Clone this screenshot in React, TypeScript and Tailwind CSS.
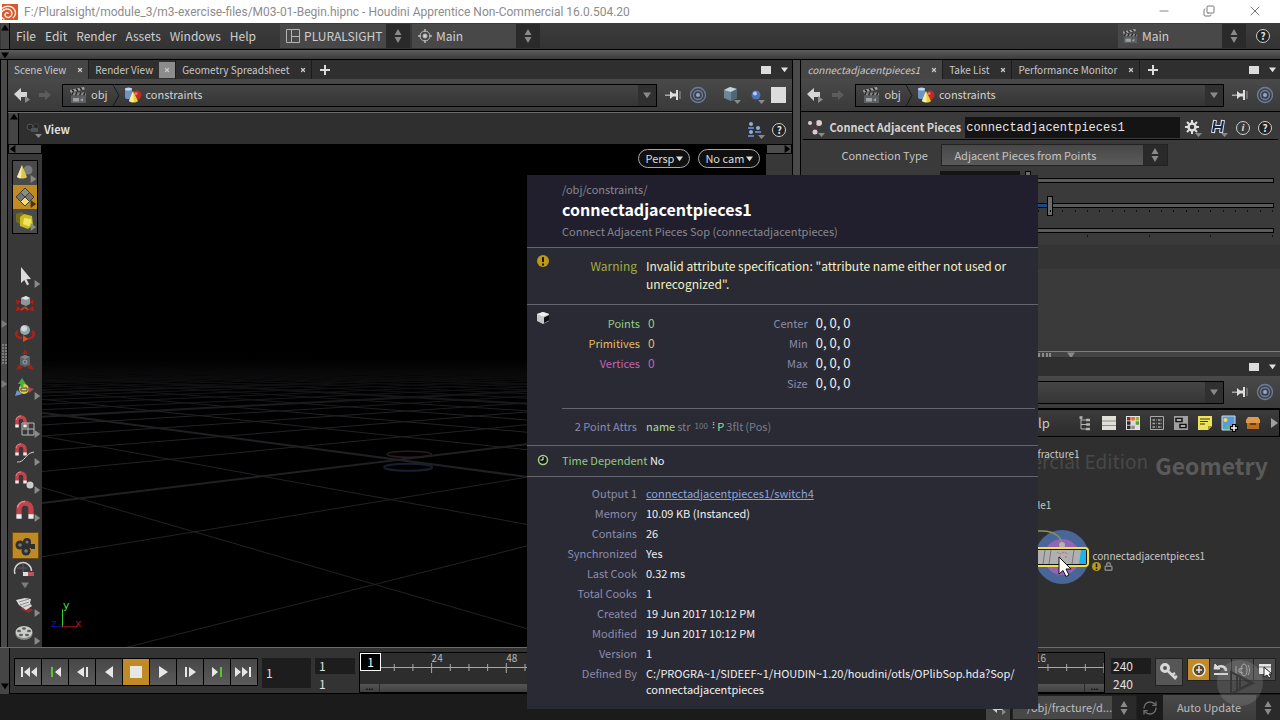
import type { ReactNode } from "react";
import { Copy, Lock, Minus, RefreshCw, X } from "lucide-react";

type Children = { children?: ReactNode };

/* ---------- small icons ---------- */

function Tri({ dir = "down", className = "" }: { dir?: "up" | "down" | "left" | "right"; className?: string }) {
  const points = {
    up: "0,8 10,8 5,1",
    down: "0,2 10,2 5,9",
    left: "8,0 8,10 1,5",
    right: "2,0 2,10 9,5",
  };
  return (
    <svg viewBox="0 0 10 10" className={"h-2 w-2 shrink-0 fill-current " + className}>
      <polygon points={points[dir]} />
    </svg>
  );
}

function UpDown() {
  return (
    <span className="flex w-6 shrink-0 flex-col items-center justify-center self-stretch bg-[#2a2a2a] text-[#8a8a8a]">
      <svg viewBox="0 0 8 14" className="h-[14px] w-2 fill-current">
        <path d="M4 0l3.5 6h-7zM4 14l3.5-6h-7z" />
      </svg>
    </span>
  );
}

function Houdini() {
  return (
    <svg viewBox="0 0 16 16" className="h-4 w-4 shrink-0">
      <rect width="16" height="16" fill="#d9572b" />
      <path
        d="M0 4.500C3 1.800 8.500 1.200 11.500 4.200c3 3 2.500 7.800-.8 9.800M0 8c1.200-2.700 5.500-4 8.200-2 2.600 2 2.200 6.200-.8 7.300-2.500.8-4.800-.9-4.400-3 .4-1.900 3.200-2.200 3.600-.4M0 13.500c1 1 1.500 1.500 2.500 2"
        fill="none"
        stroke="#fbe9df"
        strokeWidth="1.500"
      />
    </svg>
  );
}

function Clapper({ className = "h-[18px] w-[18px]" }: { className?: string }) {
  return (
    <svg viewBox="0 0 18 18" className={"shrink-0 " + className}>
      <path d="M1 4l14-3 .6 2.500L1.600 6.500z" fill="#aaa" />
      <path d="M3 3.600l2 2.100M7 2.700l2 2.200M11 1.900l2 2.100" stroke="#222" strokeWidth="1.600" />
      <rect x="2" y="6.500" width="15" height="3" fill="#8c8c8c" />
      <path d="M4 6.500l-1.500 3M8 6.500l-1.500 3M12 6.500l-1.500 3M16 6.500l-1.500 3" stroke="#222" strokeWidth="1.500" />
      <rect x="2" y="9.500" width="15" height="7.500" fill="#5b5f62" />
      <rect x="4" y="12" width="6" height="3.500" fill="#a0a0a0" />
      <path d="M11 14l3-2v3.500z" fill="#a0a0a0" />
    </svg>
  );
}

function Shapes() {
  return (
    <svg viewBox="0 0 18 16" className="h-4 w-[18px] shrink-0">
      <rect x="1" y="1" width="7" height="11" rx="2" fill="#6f93c4" />
      <ellipse cx="4.500" cy="2" rx="3.500" ry="1.500" fill="#c3d6ee" />
      <circle cx="13" cy="8" r="4.500" fill="#c32a22" />
      <circle cx="12" cy="6.500" r="1.500" fill="#e8766c" />
      <path d="M9 4l5 10c-2 2-7 2-9 0z" fill="#e8cf3a" />
      <path d="M9 4l1 11c-2 0-4 0-5-1z" fill="#f8ef9c" />
    </svg>
  );
}

function Layout() {
  return (
    <svg viewBox="0 0 14 14" className="h-[14px] w-[14px] shrink-0" fill="none" stroke="#b4b4b4">
      <path d="M.5.5h13v13H.5zM5.500.5v13M5.500 7.500h8" />
    </svg>
  );
}

function Target() {
  return (
    <svg viewBox="0 0 14 14" className="h-[14px] w-[14px] shrink-0" fill="none" stroke="#b9b9b9">
      <circle cx="7" cy="7" r="5" />
      <circle cx="7" cy="7" r="2" fill="#d0d0d0" />
      <path d="M7 0v3M7 11v3M0 7h3M11 7h3" strokeWidth="1.500" />
    </svg>
  );
}

function HistoryArrows() {
  return (
    <div className="flex items-center gap-1.5 pr-0.5">
      <button aria-label="Back" className="flex">
        <svg viewBox="0 0 18 16" className="h-4 w-[18px]">
          <path d="M0 7l7-6v4h6v5H7v4z" fill="#d6d6d6" />
          <path d="M11 9v7l5-3.500z" fill="#8a8a8a" />
        </svg>
      </button>
      <button aria-label="Forward" className="flex">
        <svg viewBox="0 0 14 14" className="h-[14px] w-[14px]">
          <path d="M13 7L7 2v3H1v4h6v3z" fill="#5c5c5c" />
        </svg>
      </button>
    </div>
  );
}

function Pin() {
  return (
    <svg viewBox="0 0 16 14" className="h-[14px] w-4 shrink-0">
      <path d="M0 6.500h6v1.500H0z" fill="#a8a8a8" />
      <path d="M5 3l3 2.500h3V2h2v10h-2V8.500H8L5 11z" fill="#dedede" />
      <path d="M15 3v8" stroke="#9a9a9a" />
    </svg>
  );
}

function Rings() {
  return (
    <svg viewBox="0 0 18 18" className="h-[18px] w-[18px] shrink-0" fill="none">
      <circle cx="9" cy="9" r="7.500" stroke="#6c7fa3" strokeWidth="1.300" />
      <circle cx="9" cy="9" r="4.500" stroke="#6c7fa3" strokeWidth="1.300" />
      <circle cx="9" cy="9" r="2" fill="#8fa6d6" />
    </svg>
  );
}

function Help() {
  return (
    <button aria-label="Help" className="flex h-[14px] w-[14px] shrink-0 items-center justify-center rounded-full border border-[#d0d0d0] bg-[#222] text-[10px] leading-none font-bold text-[#e2e2e2]">
      ?
    </button>
  );
}

/* ---------- shared pane chrome ---------- */

function Tab({ children, active, hover, italic }: Children & { active?: boolean; hover?: boolean; italic?: boolean }) {
  return (
    <div
      className={
        "flex h-[19px] items-center gap-1.5 border-r border-[#1c1c1c] pl-1.5 text-[#c8c8c8] " +
        (active ? "bg-[#464646]" : "bg-[#2f2f2f]")
      }
    >
      <button className={"pt-px whitespace-nowrap " + (italic ? "italic" : "")}>{children}</button>
      <button
        aria-label="Close tab"
        className={"flex h-4 w-4 items-center justify-center " + (hover ? "bg-[#8c8c8c]" : "")}
      >
        <X className="h-1.5 w-1.5" strokeWidth={5} />
      </button>
    </div>
  );
}

function PaneMenu() {
  return (
    <div className="ml-auto flex items-center gap-2.5 pr-1 text-[#e0e0e0]">
      <button aria-label="Maximize pane" className="h-2 w-2.5 bg-[#dcdcdc]" />
      <button aria-label="Pane menu" className="flex">
        <Tri className="h-[7px] w-[7px]" />
      </button>
    </div>
  );
}

function TabBar({ children }: Children) {
  return (
    <div className="flex h-[19px] shrink-0 items-center bg-[#2f2f2f] text-[10px] leading-4">
      {children}
      <PaneMenu />
    </div>
  );
}

function AddTab() {
  return (
    <button aria-label="New tab" className="ml-2 flex">
      <svg viewBox="0 0 10 10" className="h-2.5 w-2.5" stroke="#dcdcdc" strokeWidth="2">
        <path d="M5 0v10M0 5h10" />
      </svg>
    </button>
  );
}

function PathBar({ children }: Children) {
  return (
    <div className="flex h-[33px] shrink-0 items-center gap-2 border-b border-black bg-linear-to-b from-[#494949] to-[#3a3a3a] pr-1.5 pl-1.5">
      <HistoryArrows />
      <div className="flex h-[23px] min-w-0 flex-1 items-center border border-black bg-linear-to-b from-[#454545] to-[#353535] text-[11px] text-[#d0d0d0]">
        <button className="flex h-full items-center gap-1 pl-1.5">
          <Clapper /> <span className="pb-px">obj</span>
        </button>
        <svg viewBox="0 0 8 22" className="mx-1 h-[21px] w-2 shrink-0" fill="none" stroke="#161616">
          <path d="M1 0l6 11-6 11" />
        </svg>
        <button className="flex h-full items-center gap-1">
          <Shapes /> <span className="pb-px">constraints</span>
        </button>
        <button aria-label="Recent paths" className="ml-auto flex h-full w-[18px] items-center justify-center bg-[#303030] text-[#8a8a8a]">
          <Tri />
        </button>
      </div>
      <div className="flex items-center gap-2">
        <Pin />
        <Rings />
      </div>
      {children}
    </div>
  );
}

/* ---------- viewport ---------- */

// Ground grid, two line families running to their own vanishing points
const horizon = 206;
const familyA = Array.from({ length: 34 }, (_, i) => i - 2).map((k) => ({
  k,
  d: `M1258 ${horizon}L0 ${horizon + 1 / (0.00654 + 0.0017 * k)}`,
}));
const familyB = Array.from({ length: 40 }, (_, i) => i - 2).map((k) => ({
  k,
  d: `M-472 ${horizon}L485 ${horizon + 1 / (0.00789 + 0.00215 * k)}l957 ${1 / (0.00789 + 0.00215 * k)}`,
}));

function Viewport() {
  return (
    <div className="relative min-w-0 flex-1 overflow-hidden bg-black">
      <svg viewBox="0 0 724 503" preserveAspectRatio="xMinYMin slice" className="h-full w-full" fill="none">
        <defs>
          <linearGradient id="fog" x1="0" y1="0" x2="0" y2="1">
            <stop offset="0" stopColor="#000" />
            <stop offset="0.200" stopColor="#000" />
            <stop offset="1" stopColor="#000" stopOpacity="0" />
          </linearGradient>
        </defs>
        {[...familyA, ...familyB].map((l) => (
          <path
            key={l.d}
            d={l.d}
            stroke={l.k % 5 === 0 ? "#202024" : "#222226"}
            strokeWidth={l.k % 5 === 0 ? 2 : 1}
          />
        ))}
        <rect y="200" width="724" height="70" fill="url(#fog)" />
        <ellipse cx="367" cy="310" rx="22" ry="3" stroke="#2c1c1e" strokeWidth="1.500" />
        <ellipse cx="366" cy="323" rx="24" ry="3.500" stroke="#1c1d30" strokeWidth="2" />
        <path d="M20.500 483v-18" stroke="#2fd02f" />
        <path d="M20 482.500h16" stroke="#b01010" />
        <path d="M20 482.500H9" stroke="#1010b0" />
        <g fontSize="11" fontFamily="DejaVu Sans">
          <text x="21" y="465" fill="#3be03b">y</text>
          <text x="33" y="483" fill="#b01010">x</text>
          <text x="9" y="483" fill="#1010b0">z</text>
        </g>
      </svg>
      <div className="absolute top-[5px] right-1.5 flex gap-2 text-[11px] text-[#dcdcdc]">
        {["Persp", "No cam"].map((t) => (
          <button key={t} className="flex h-[19px] items-center gap-0.5 rounded-full border border-[#a8a8a8] bg-[#101010] px-1.5 pb-px">
            {t} <Tri className="h-[7px] w-[7px]" />
          </button>
        ))}
      </div>
    </div>
  );
}

function Magnet({ big, children }: Children & { big?: boolean }) {
  return (
    <svg viewBox="0 0 24 24" className="h-6 w-6" fill="none">
      <g transform={big ? "translate(3 2) scale(1.500)" : "translate(2 1)"}>
        <path d="M2 10V6a4 4 0 0 1 8 0v4" stroke="#c3424b" strokeWidth="3.500" />
        <path d="M2 9.500v3M10 9.500v3" stroke="#ededed" strokeWidth="3.500" />
        <path d="M1 5a5 5 0 0 1 5-4" stroke="#e88a8e" />
      </g>
      {children}
    </svg>
  );
}

const transformTools: { name: string; more?: boolean; icon: ReactNode }[] = [
  {
    name: "Select",
    more: true,
    icon: <path d="M8 3l10 12-4.500.3 2.500 5-2 1-2.700-5.300L8 19z" fill="#dcdcdc" />,
  },
  {
    name: "Move",
    icon: (
      <>
        <path d="M3 9h18l-1 9H3z" stroke="#7c1a16" strokeWidth="1.500" />
        <path d="M3 8l5 1-4 4zM21 8l-5 1 4 4zM3 19l1-5 5 4zM21 19l-1-5-5 4z" fill="#a3241b" />
        <path d="M8 18l4-3M15 18l-3-3" stroke="#c0431c" strokeWidth="2" />
        <path d="M8 6l5-2 4 2v6l-4 2-5-2z" fill="#8d979f" />
        <path d="M8 6l5-2 4 2-4 2z" fill="#dde3e7" />
      </>
    ),
  },
  {
    name: "Rotate",
    icon: (
      <>
        <path d="M5 11c-4 3-1 7 4 7M19 11c4 3 1 8-6 8" stroke="#a82318" strokeWidth="2.500" />
        <path d="M10 15l5 4-5 3z" fill="#d9541e" />
        <circle cx="12" cy="10" r="5" fill="#98a3ab" />
        <circle cx="11" cy="8.500" r="3" fill="#cfd7dc" />
      </>
    ),
  },
  {
    name: "Scale",
    icon: (
      <>
        <path d="M12 1l3 5H9zM3 22l3-6 4 4zM21 22l-3-6-4 4z" fill="#a81f1a" />
        <path d="M7 9l5-2 5 2v8l-5 2-5-2z" fill="#5c6166" />
        <path d="M7 9l5-2 5 2-5 2z" fill="#7d858b" />
        <circle cx="12" cy="14" r="2" stroke="#9aa2a8" />
      </>
    ),
  },
  {
    name: "Handles",
    more: true,
    icon: (
      <>
        <circle cx="11" cy="13" r="5" fill="#d9cf4a" />
        <path d="M9 2l4 6H5z" fill="#47b03a" />
        <path d="M9 7v4" stroke="#47b03a" strokeWidth="3" />
        <path d="M15 11l6 2-5 4z" fill="#c33a48" />
        <path d="M2 20l2-6 5 4z" fill="#6b9bd0" />
        <path d="M8 12h6v3H8z" stroke="#444" />
      </>
    ),
  },
];

const snapTools = [
  {
    name: "Snap to grid",
    big: false,
    icon: <path d="M9 9h12v12H9zM15 9v12M9 15h12" stroke="#b9b9b9" />,
  },
  { name: "Snap to curve", big: false, icon: <path d="M4 20c8 1 8-9 17-10" stroke="#c9c9c9" /> },
  { name: "Snap to point", big: false, icon: <circle cx="17" cy="15" r="3.500" fill="#cdcdcd" /> },
  { name: "Snap", big: true, icon: null },
];

function Tool({ name, more, children }: Children & { name: string; more?: boolean }) {
  return (
    <button aria-label={name} className="relative flex h-7 w-8 shrink-0 items-center justify-center">
      {children}
      {more && <Tri dir="right" className="absolute right-0 bottom-0.5 text-[#8a8a8a]" />}
    </button>
  );
}

function Toolbox() {
  return (
    <div className="flex w-[34px] shrink-0 flex-col items-center bg-[#383838]">
      <button aria-label="Collapse toolbox" className="flex h-2.5 w-full shrink-0 items-center border border-black bg-[#4c4c4c] text-black">
        <Tri dir="left" />
      </button>
      <div className="mt-1.5 flex shrink-0 flex-col border border-black bg-[#4a4a4a]">
        <button aria-label="Objects" className="relative flex h-6 w-6 items-center justify-center">
          <svg viewBox="0 0 24 24" className="h-6 w-6">
            <circle cx="15" cy="9" r="4.500" fill="#7a7d80" />
            <path d="M9 4l5 12c-2 2-8 2-10 0z" fill="#d9c752" />
            <path d="M9 4l-1 13c-2 0-3-.5-4-1z" fill="#f4ecac" />
          </svg>
          <Tri dir="right" className="absolute right-0 bottom-0.5 text-[#8a8a8a]" />
        </button>
        <button aria-label="Points" className="relative flex h-6 w-6 items-center justify-center bg-[#c08a24]">
          <svg viewBox="0 0 24 24" className="h-6 w-6" stroke="#3d3d3d">
            <path d="M12 3l4.500 4.500L12 12 7.500 7.500z" fill="#8c8c86" />
            <path d="M7.500 7.500L12 12l-4.500 4.500L3 12z" fill="#747470" />
            <path d="M16.500 7.500L21 12l-4.500 4.500L12 12z" fill="#747470" />
            <path d="M12 12l4.500 4.500L12 21l-4.500-4.500z" fill="#f3dd78" />
          </svg>
          <Tri dir="right" className="absolute right-0 bottom-px text-[#4c3408]" />
        </button>
        <button aria-label="Dynamics" className="relative flex h-6 w-6 items-center justify-center">
          <svg viewBox="0 0 24 24" className="h-6 w-6">
            <path d="M3 5l6-2 3 4-3 9-6-3z" fill="#726d1c" />
            <path d="M7 8l4-3 8 2 1 9-5 4-8-3z" fill="#c9bd23" />
            <path d="M11 9l7 1 1 6-4 1-5-2z" fill="#efe65c" />
          </svg>
          <Tri dir="right" className="absolute right-0 bottom-0.5 text-[#8a8a8a]" />
        </button>
      </div>
      <div className="mt-2 mb-5 h-px w-full bg-[#303030]" />
      {transformTools.map((t) => (
        <Tool key={t.name} name={t.name} more={t.more}>
          <svg viewBox="0 0 24 24" className="h-6 w-6" fill="none">
            {t.icon}
          </svg>
        </Tool>
      ))}
      <div className="mt-1 mb-1.5 h-px w-full bg-[#2e2e2e]" />
      {snapTools.map((t) => (
        <Tool key={t.name} name={t.name} more>
          <Magnet big={t.big}>{t.icon}</Magnet>
        </Tool>
      ))}
      <div className="mt-1 mb-1 h-px w-full bg-[#2e2e2e]" />
      <button aria-label="View" className="flex h-[27px] w-[27px] shrink-0 items-center justify-center border border-[#6b4c12] bg-[#bf8a24]">
        <svg viewBox="0 0 24 24" className="h-6 w-6" fill="#2e2e30">
          <circle cx="14" cy="8" r="4" />
          <circle cx="7" cy="11" r="4.500" />
          <path d="M8 10h10v4H8zM18 10h4v5h-4z" />
          <circle cx="13" cy="17" r="4.500" />
          <circle cx="14" cy="8" r="1.500" fill="#777" />
          <circle cx="7" cy="11" r="1.800" fill="#777" />
          <circle cx="13" cy="17" r="1.800" fill="#777" />
        </svg>
      </button>
      <button aria-label="Render region" className="flex h-[22px] w-8 shrink-0 items-center justify-center">
        <svg viewBox="0 0 24 20" className="h-5 w-6" fill="none">
          <path d="M2 14a8.500 8.500 0 1 1 16.500-3" stroke="#d0d0d0" strokeWidth="1.500" />
          <path d="M10 4v9M4 8h10" stroke="#5c5c5c" />
          <path d="M10 12h11v4H10z" fill="#b5545c" />
          <path d="M10 12h5v4h-5z" fill="#ddd" />
        </svg>
      </button>
      <Tri className="mb-0.5 text-[#7c7c7c]" />
      <Tool name="Flipbook" more>
        <svg viewBox="0 0 24 24" className="h-6 w-6">
          <path d="M7 16l9 4 4-3-8-5z" fill="#8c2f33" />
          <path d="M3 7l9-2 6 1-1 4 2 3-6 4-7-5z" fill="#dcdcdc" />
          <path d="M6 9l10-3M7 12l9-3M10 14l8-3" stroke="#8c8c8c" />
        </svg>
      </Tool>
      <Tool name="Render" more>
        <svg viewBox="0 0 24 24" className="h-6 w-6">
          <ellipse cx="11" cy="13" rx="8.500" ry="6" fill="#858885" />
          <ellipse cx="11" cy="11" rx="8.500" ry="6" fill="#c9ccc9" />
          <g fill="#5c5f5c">
            <ellipse cx="11" cy="7.500" rx="2" ry="1.300" />
            <ellipse cx="6" cy="10" rx="2" ry="1.300" />
            <ellipse cx="16" cy="10" rx="2" ry="1.300" />
            <ellipse cx="8" cy="14" rx="2" ry="1.300" />
            <ellipse cx="14" cy="14" rx="2" ry="1.300" />
          </g>
        </svg>
      </Tool>
    </div>
  );
}

function ScenePane() {
  return (
    <section className="flex min-w-0 flex-[785] flex-col border-r border-black">
      <TabBar>
        <Tab active>Scene View</Tab>
        <Tab hover>Render View</Tab>
        <Tab>Geometry Spreadsheet</Tab>
        <AddTab />
      </TabBar>
      <PathBar>
        <div className="ml-2 flex items-center gap-1.5">
          <svg viewBox="0 0 18 18" className="h-[18px] w-[18px]">
            <path d="M1 4l6-3 7 2v9l-6 3-7-3z" fill="#6e8794" />
            <path d="M1 4l6-3 7 2-6 3z" fill="#c3d3db" />
            <path d="M8 6v9l6-3V3z" fill="#4f6876" />
            <path d="M11 14h7l-3.500 4z" fill="#8a8a8a" />
          </svg>
          <svg viewBox="0 0 18 18" className="h-[18px] w-[18px]">
            <circle cx="9" cy="9" r="4.500" fill="#4d72b5" />
            <circle cx="8" cy="7.500" r="2" fill="#b9cdf0" />
            <path d="M11 14h7l-3.500 4z" fill="#8a8a8a" />
          </svg>
          <button aria-label="Background" className="h-4 w-[15px] bg-[#dcdcdc]" />
        </div>
      </PathBar>
      <div className="flex h-8 shrink-0 items-stretch border-t border-[#6b6b6b] bg-[#2f2f2f] pl-px">
        <button aria-label="Hide toolbar" className="flex w-2.5 justify-center border-r border-black bg-[#454545] text-black">
          <Tri dir="up" />
        </button>
        <div className="flex flex-1 items-center gap-px pt-0.5 pr-1.5 pl-1.5 text-[11px] font-bold text-[#dedede]">
          <svg viewBox="0 0 18 18" className="h-[18px] w-[18px]">
            <circle cx="5" cy="6" r="3" fill="#262626" stroke="#555" />
            <circle cx="11" cy="5" r="2.500" fill="#262626" stroke="#444" />
            <path d="M6 7h7v4H6z" fill="#4d5258" />
            <path d="M10 13h7l-3.500 4z" fill="#8a8a8a" />
          </svg>
          <span>View</span>
          <svg viewBox="0 0 18 18" className="mr-1.5 ml-auto h-[18px] w-[18px]">
            <g fill="#90aee0">
              <circle cx="4" cy="3" r="2" />
              <circle cx="4" cy="11" r="2" />
              <circle cx="11" cy="7" r="2" />
            </g>
            <path d="M1 7h6M1 15h6M8 11h6" stroke="#5b7fc0" strokeWidth="2" />
            <path d="M11 14h7l-3.500 4z" fill="#8a8a8a" />
          </svg>
          <Help />
        </div>
      </div>
      <div className="flex min-h-0 flex-1">
        <Toolbox />
        <Viewport />
        <div className="w-[26px] shrink-0 bg-[#383838]">
          <button aria-label="Collapse display options" className="flex h-2.5 w-full items-center justify-end border border-black bg-[#4c4c4c] text-black">
            <Tri dir="right" />
          </button>
        </div>
      </div>
    </section>
  );
}

/* ---------- parameters and network ---------- */

function Slider({ label, value, ticks }: { label: string; value: number; ticks: number }) {
  return (
    <div className="flex h-[25px] items-center gap-1 pr-1.5 pl-[139px]">
      <input aria-label={label + " value"} defaultValue={value} className="h-5 w-20 shrink-0 bg-[#141414] px-1 text-xs text-[#ddd]" />
      <div className="relative min-w-0 flex-1">
        <input
          type="range"
          aria-label={label}
          defaultValue={value}
          className={
            "block h-5 w-full appearance-none bg-transparent [&::-webkit-slider-runnable-track]:h-[5px] [&::-webkit-slider-runnable-track]:border [&::-webkit-slider-runnable-track]:border-black [&::-webkit-slider-thumb]:-mt-2 [&::-webkit-slider-thumb]:h-5 [&::-webkit-slider-thumb]:w-1.5 [&::-webkit-slider-thumb]:appearance-none [&::-webkit-slider-thumb]:border [&::-webkit-slider-thumb]:border-black [&::-webkit-slider-thumb]:bg-[#6c6c6c] " +
            (value > 0
              ? "[&::-webkit-slider-runnable-track]:bg-[linear-gradient(to_right,#1d4a86_9%,#5a5a5a_9%)]"
              : "[&::-webkit-slider-runnable-track]:bg-[#5a5a5a]")
          }
        />
        <div className="absolute inset-x-0 bottom-1 flex justify-between px-px">
          {Array.from({ length: ticks }, (_, i) => (
            <span key={i} className="h-0.5 w-px bg-[#111]" />
          ))}
        </div>
      </div>
    </div>
  );
}

function ParameterPane() {
  return (
    <div className="flex flex-[291] flex-col bg-[#3a3a3a]">
      <TabBar>
        <Tab active italic>connectadjacentpieces1</Tab>
        <Tab>Take List</Tab>
        <Tab>Performance Monitor</Tab>
        <AddTab />
      </TabBar>
      <PathBar />
      <div className="mx-0.5 flex h-7 shrink-0 items-center gap-1 border-b border-black pt-1 pr-1.5 pl-1 text-[11px] text-[#d4d4d4]">
        <svg viewBox="0 0 18 18" className="h-[18px] w-[18px] shrink-0">
          <g fill="#d8cfcf">
            <circle cx="3" cy="4" r="2" />
            <circle cx="12" cy="4" r="3" />
            <circle cx="8" cy="13" r="2.500" />
          </g>
          <path d="M5 4h5M11 7l-2 4M4 6l3 5" stroke="#8a3038" strokeDasharray="2 1" />
          <path d="M11 14h7l-3.500 4z" fill="#8a8a8a" />
        </svg>
        <label htmlFor="op-name" className="font-bold whitespace-nowrap">
          Connect Adjacent Pieces
        </label>
        <input
          id="op-name"
          defaultValue="connectadjacentpieces1"
          className="h-[21px] min-w-0 flex-1 bg-[#141414] px-px font-['Liberation_Mono',monospace] text-xs text-[#e6e6e6]"
        />
        <div className="flex items-center gap-2">
          <button aria-label="Gear menu" className="flex">
            <svg viewBox="0 0 18 18" className="h-[18px] w-[18px]" fill="none" stroke="#e0e0e0">
              <circle cx="8" cy="8" r="3.500" strokeWidth="2.500" />
              <path d="M8 1v3M8 12v3M1 8h3M12 8h3M3 3l2 2M11 11l2 2M13 3l-2 2M5 11l-2 2" strokeWidth="2" />
              <path d="M11 14h7l-3.500 4z" fill="#8a8a8a" stroke="none" />
            </svg>
          </button>
          <button aria-label="Houdini help" className="flex">
            <svg viewBox="0 0 18 18" className="h-[18px] w-[18px]" fill="none">
              <path d="M5 1L3 14M13 1l-2 13M4 8h8" stroke="#dfe6ee" strokeWidth="4" />
              <path d="M5 2L3 13M13 2l-2 11M4 8h8" stroke="#14264a" strokeWidth="2" />
              <path d="M11 14h7l-3.500 4z" fill="#8a8a8a" />
            </svg>
          </button>
          <button aria-label="Info" className="flex h-[14px] w-[14px] items-center justify-center rounded-full border border-[#d0d0d0] font-['Liberation_Serif',serif] text-[11px] leading-none font-bold italic">
            i
          </button>
          <Help />
        </div>
      </div>
      <div className="flex h-8 items-center gap-4 pb-0.5 pl-10 text-[11px] text-[#c4c4c4]">
        <span className="w-[84px] text-right whitespace-nowrap">Connection Type</span>
        <button aria-label="Connection type" className="flex h-[22px] w-[227px] items-center border border-[#222] bg-linear-to-b from-[#484848] to-[#5a5a5a] pl-3">
          <span className="flex-1 text-left">Adjacent Pieces from Points</span>
          <UpDown />
        </button>
      </div>
      <div className="-mt-1">
        <Slider label="Max search points" value={0} ticks={0} />
        <Slider label="Search radius" value={9} ticks={21} />
        <Slider label="Max connections" value={0} ticks={5} />
      </div>
      <div className="mt-0.5 h-6 bg-[#343434]" />
    </div>
  );
}

function NetworkIcons() {
  const palette = ["#a31f1f", "#e0701c", "#a8b02a", "#2a2a2a", "#d8d8d8", "#56a03c", "#2a2a2a", "#8d8d8d", "#dcdcdc"];
  return (
    <div className="ml-auto flex items-center gap-2">
      <svg viewBox="0 0 16 16" className="h-4 w-4" fill="none" stroke="#b4b4b4">
        <path d="M4 2v12M4 5h5M4 9.500h5M4 14h5" />
        <path d="M2.500 2.500h3M9 5h4M9 9.500h4M9 14h4" strokeWidth="2.500" />
      </svg>
      <svg viewBox="0 0 16 16" className="h-4 w-4">
        <path fill="#e0e0d8" d="M1 1h14v14H1z" />
        <path d="M1 6h14M1 10.500h14" stroke="#8c8c88" />
      </svg>
      <svg viewBox="0 0 16 16" className="h-4 w-4">
        <path fill="#e6e6e6" d="M1 1h14v14H1z" />
        {palette.map((c, i) => (
          <rect key={i} x={2 + (i % 3) * 4.3} y={2 + Math.floor(i / 3) * 4.3} width="3.500" height="3.500" fill={c} />
        ))}
      </svg>
      <svg viewBox="0 0 16 16" className="h-4 w-4" fill="none" stroke="#a8a8a8">
        <path d="M1.500 1.500h13v13h-13z" />
        <path d="M3.500 5h4M9 5h4M3.500 8.500h4M9 8.500h4M3.500 12h4M9 12h4" strokeWidth="1.500" strokeDasharray="2.500 1" />
      </svg>
      <svg viewBox="0 0 16 16" className="h-4 w-4">
        <path fill="#a0a0a0" d="M1 1h14v14H1z" />
        <path fill="#ddd" stroke="#111" strokeWidth="1.500" d="M3 3.500h6v3H3zM7 9.500h6v3H7z" />
      </svg>
      <svg viewBox="0 0 16 16" className="h-4 w-4">
        <path d="M1 1h14v10l-4 4H1z" fill="#efe35c" />
        <path d="M15 11l-4 4v-4z" fill="#a79b2a" />
        <path d="M3 4h10M3 6.500h8M3 9h5" stroke="#3a3a1a" />
      </svg>
      <svg viewBox="0 0 16 16" className="h-4 w-4 overflow-visible">
        <path fill="#5b9ad8" stroke="#c9dcee" d="M1 1h13v14H1z" />
        <circle cx="4.500" cy="5" r="2" fill="#f0e040" />
        <path d="M2 14l5-5 3 3 2-2 2 2v2z" fill="#5fae9c" />
        <path d="M13 9v8M9 13h8" stroke="#000" strokeWidth="4" />
        <path d="M13 10v6M10 13h6" stroke="#fff" strokeWidth="1.500" />
      </svg>
      <svg viewBox="0 0 16 16" className="h-4 w-4">
        <path d="M1 5l2-3h10l2 3v3H1z" fill="#e09a4c" />
        <path d="M2 8h12v6H2z" fill="#b86d24" />
        <path d="M5 8h6v2H5z" fill="#6b3c10" />
      </svg>
      <button aria-label="More tools" className="flex text-[#a0a0a0]">
        <Tri dir="right" className="h-2.5 w-2.5" />
      </button>
    </div>
  );
}

function NetworkPane() {
  return (
    <div className="flex flex-[290] flex-col bg-[#2f2f2f]">
      <TabBar />
      <PathBar />
      <div className="flex h-7 shrink-0 items-center border border-black bg-linear-to-b from-[#3c3c3c] to-[#2c2c2c] text-[13px] text-[#c8c8c8]">
        <button className="ml-[219px]">Help</button>
        <NetworkIcons />
      </div>
      {/* node canvas */}
      <div className="relative min-h-0 flex-1 overflow-hidden text-[10px] leading-[18px] text-[#c8c8c8]">
        <span className="absolute top-2.5 right-[132px] text-[19px] leading-7 whitespace-nowrap text-[#484848]">
          Non-Commercial Edition
        </span>
        <span className="absolute top-3.5 right-3 text-[23px] leading-7 font-bold text-[#5a5a5a]">Geometry</span>
        <span className="absolute top-2 left-[236px]">fracture1</span>
        <span className="absolute top-[59px] left-[236px]">le1</span>
        <svg viewBox="0 0 80 70" className="absolute top-[83px] left-[216px] h-[70px] w-20" fill="none">
          <circle cx="45" cy="37" r="27" fill="#4a6598" />
          <circle cx="45" cy="37" r="18" fill="#9264b4" />
          <path d="M5 11h20c12 0 20 6 20 14" stroke="#86985c" strokeWidth="1.500" />
          <circle cx="45" cy="25" r="3" fill="#b4b0b8" />
          <rect x="-10" y="28" width="81" height="18" rx="3" fill="#111" stroke="#f0df4a" strokeWidth="2" />
          <path d="M0 30h64v14H0z" fill="#b0b0b0" />
          <path d="M64 30h5v14h-7z" fill="#1cb4e8" />
          <path d="M28 30l-2 14M34 30l-2 14M57 30l-2 14" stroke="#777" />
          <path d="M40 32l3 2 4-2 4 2M42 37h3M48 37h3" stroke="#b86a78" strokeDasharray="2 1" />
          <path d="M42 37v17l4-3.500 3 6 3-1.500-3-6h5z" fill="#fff" stroke="#111" />
        </svg>
        <span className="absolute top-[110px] left-[291px]">connectadjacentpieces1</span>
        <div className="absolute top-[125px] left-[291px] flex items-center gap-[3px]">
          <WarnDot className="h-[9px] w-[9px]" />
          <Lock className="h-[9px] w-[9px] text-[#858585]" strokeWidth={4} />
        </div>
      </div>
    </div>
  );
}

function WarnDot({ className }: { className: string }) {
  return (
    <svg viewBox="0 0 12 12" className={className}>
      <circle cx="6" cy="6" r="6" fill="#b9981a" />
      <path d="M6 2v5M6 8.500v2" stroke="#1c1808" strokeWidth="2" />
    </svg>
  );
}

/* ---------- node info popup ---------- */

const cookInfo = [
  ["Memory", "10.09 KB (Instanced)"],
  ["Contains", "26"],
  ["Synchronized", "Yes"],
  ["Last Cook", "0.32 ms"],
  ["Total Cooks", "1"],
  ["Created", "19 Jun 2017 10:12 PM"],
  ["Modified", "19 Jun 2017 10:12 PM"],
  ["Version", "1"],
];

const counts = [
  ["Points", "text-[#93cd82]"],
  ["Primitives", "text-[#e3bd62]"],
  ["Vertices", "text-[#c264b4]"],
];

function NodeInfo() {
  return (
    <div
      role="dialog"
      aria-label="Node info"
      className="absolute top-[175px] left-[527px] w-[511px] bg-[#2a2a35] text-[11px] leading-5 text-[#f0f0f0]"
    >
      <header className="border-b border-[#65656d] bg-[#211f2d] pt-[5px] pb-[5px] pl-[35px] text-[#87878d]">
        <p className="leading-[18px]">/obj/constraints/</p>
        <h2 className="text-base leading-[22px] font-bold text-white">connectadjacentpieces1</h2>
        <p className="leading-[22px]">Connect Adjacent Pieces Sop (connectadjacentpieces)</p>
      </header>

      <section className="flex border-b border-[#65656d] pt-[9px] pb-[11px] text-xs leading-[18px]">
        <div className="w-[35px] shrink-0 pl-2.5">
          <WarnDot className="-mt-0.5 h-3 w-3" />
        </div>
        <span className="w-[75px] shrink-0 text-right text-[#a3ad3f]">Warning</span>
        <p className="pr-2 pl-[9px] text-[#f4f1c4]">
          Invalid attribute specification: "attribute name either not used or
          <br />
          unrecognized".
        </p>
      </section>

      <section className="flex border-b border-[#65656d] pt-2">
        <div className="w-[35px] shrink-0 pl-2.5">
          <svg viewBox="0 0 12 12" className="-mt-px h-3 w-3">
            <path d="M0 2l6-2 6 2v7l-6 3-6-3z" fill="#c6c6c8" />
            <path d="M7 5.500l5-2.500v5.500L7 11z" fill="#101014" />
            <path d="M0 2l6-2 6 2-6 2.500z" fill="#f0f0f0" />
          </svg>
        </div>
        <div className="flex-1">
          <div className="flex h-[95px] pb-3.5">
            <dl className="grid grid-cols-[78px_auto] content-start gap-x-2">
              {counts.map(([name, color]) => (
                <div key={name} className={"col-span-2 grid grid-cols-subgrid " + color}>
                  <dt className="text-right">{name}</dt>
                  <dd className="text-xs leading-5">0</dd>
                </div>
              ))}
            </dl>
            <dl className="grid grid-cols-[153px_auto] content-start gap-x-2">
              {["Center", "Min", "Max", "Size"].map((name) => (
                <div key={name} className="col-span-2 grid grid-cols-subgrid">
                  <dt className="text-right text-[#8c8cab]">{name}</dt>
                  <dd className="text-[13px] leading-5">0, 0, 0</dd>
                </div>
              ))}
            </dl>
          </div>
          <div className="mr-[3px] flex h-[37px] items-start gap-[9px] border-t border-[#65656d] pt-[7px]">
            <span className="w-[75px] text-right text-[#8c8cab]">2 Point Attrs</span>
            <p className="flex gap-0.5 text-[#7c7c86]">
              <span className="text-[#a6dc9a]">name</span>
              <span>str</span>
              <span className="px-0.5 text-[8px]">100</span>
              <span className="font-['DejaVu_Sans',sans-serif] text-[#c8c8c8]">⁝</span>
              <span className="text-[#a6dc9a]">P</span>
              <span>3flt</span>
              <span>(Pos)</span>
            </p>
          </div>
        </div>
      </section>

      <section className="flex h-[31px] items-center border-b border-[#65656d] pb-0.5">
        <div className="w-[35px] pl-2.5">
          <svg viewBox="0 0 12 12" className="h-3 w-3" fill="none">
            <circle cx="6" cy="6" r="4.500" fill="#16180f" stroke="#a6cf8c" strokeWidth="1.500" />
            <path d="M6 3v3H3.500" stroke="#fff" />
          </svg>
        </div>
        <p>
          <span className="text-[#93c97c]">Time Dependent</span> No
        </p>
      </section>

      <dl className="grid grid-cols-[110px_1fr] gap-x-[9px] pt-1.5 pb-3">
        <dt className="text-right text-[#8c8cab]">Output 1</dt>
        <dd>
          <a href="#switch4" className="text-[#8ba6d9] underline">
            connectadjacentpieces1/switch4
          </a>
        </dd>
        {cookInfo.map(([name, value]) => (
          <div key={name} className="col-span-2 grid grid-cols-subgrid">
            <dt className="text-right text-[#8c8cab]">{name}</dt>
            <dd>{value}</dd>
          </div>
        ))}
        <dt className="text-right text-[#8c8cab]">Defined By</dt>
        <dd className="pt-0.5 leading-4 whitespace-nowrap">
          C:/PROGRA~1/SIDEEF~1/HOUDIN~1.20/houdini/otls/OPlibSop.hda?Sop/
          <br />
          connectadjacentpieces
        </dd>
      </dl>
    </div>
  );
}

/* ---------- playbar ---------- */

const transport: [string, string, string][] = [
  ["First frame", "M3 5h2v10H3zM12 5v10l-6-5zM19 5v10l-6-5z", ""],
  ["Previous key", "M16 5v10l-6-5z", "M6 5h2v10H6z"],
  ["Step back", "M12 5v10l-7-5zM14 5h2v10h-2z", ""],
  ["Play backward", "M14 4v12l-8-6z", ""],
  ["Stop", "M4 4h12v12H4z", ""],
  ["Play", "M6 4v12l9-6z", ""],
  ["Step forward", "M5 5h2v10H5zM9 5v10l7-5z", ""],
  ["Next key", "M5 5v10l6-5z", "M13 5h2v10h-2z"],
  ["Last frame", "M1 5v10l6-5zM8 5v10l6-5zM15 5h2v10h-2z", ""],
];

// Frames 1-240 mapped to a percentage of the track
const at = (frame: number) => `${((frame - 1) / 239) * 100}%`;
const ticks = Array.from({ length: 40 }, (_, i) => (i + 1) * 6);

function Playbar() {
  return (
    <div className="flex h-[47px] shrink-0 border-t border-[#6b6b6b] bg-[#333]">
      <button aria-label="Hide playbar" className="flex w-2.5 shrink-0 flex-col items-center justify-end border-r border-black bg-[#454545] pb-1 text-black">
        <Tri />
      </button>
      <div className="flex min-w-0 flex-1 gap-1 border-b border-black pt-2.5 pr-1 pl-1 text-xs text-[#e0e0e0]">
        <div className="flex h-7 shrink-0 border border-r-0 border-black">
          {transport.map(([name, d, key]) => (
            <button
              key={name}
              aria-label={name}
              className={
                "flex w-[27px] items-center justify-center border-r border-black " +
                (name === "Stop" ? "bg-[#c08a24]" : "bg-linear-to-b from-[#474747] to-[#5a5a5a]")
              }
            >
              <svg viewBox="0 0 20 20" className="h-5 w-5">
                <path d={d} fill="#e6e6e6" />
                <path d={key} fill="#5ec233" />
              </svg>
            </button>
          ))}
        </div>
        <input aria-label="Current frame" defaultValue="1" className="h-[30px] w-[49px] shrink-0 bg-[#1d1d1d] px-1 pb-0.5" />
        <div className="flex w-10 shrink-0 flex-col gap-0.5">
          <input aria-label="Range start" defaultValue="1" className="h-4 w-full bg-[#1d1d1d] px-1" />
          <span className="px-1 leading-4">1</span>
        </div>
        <div className="relative -mt-1.5 flex min-w-0 flex-1 flex-col border border-black bg-[#2d2d2d]">
          <svg className="h-8 w-full overflow-hidden" stroke="#a8a8a8">
            <line x1="0" y1="14.500" x2="100%" y2="14.500" />
            {ticks.map((f) => (
              <line key={f} x1={at(f)} x2={at(f)} y1={f % 24 ? 11 : 10} y2={f % 24 ? 18 : 20} />
            ))}
            <g stroke="none" fill="#b8b8b8" fontSize="10">
              {ticks.filter((f) => f % 24 === 0).map((f) => (
                <text key={f} x={at(f)} y="9">{f}</text>
              ))}
            </g>
          </svg>
          <div className="flex h-2 justify-between bg-linear-to-b from-[#555] to-[#404040] text-[8px] leading-[6px] text-black">
            <span className="w-5 border-r border-[#2a2a2a] text-center font-bold">...</span>
            <span className="w-5 border-l border-[#2a2a2a] text-center font-bold">...</span>
          </div>
          <span className="absolute top-0 left-0 flex h-[18px] w-[21px] items-center justify-center border border-white bg-black text-xs text-white">
            1
          </span>
        </div>
        <div className="flex w-[42px] shrink-0 flex-col gap-0.5 pl-0.5">
          <input aria-label="Range end" defaultValue="240" className="h-4 w-full bg-[#1d1d1d] px-0.5" />
          <span className="px-0.5 leading-4">240</span>
        </div>
        <button aria-label="Set key" className="flex h-7 w-7 shrink-0 items-center justify-center border border-[#222] bg-[#565656]">
          <svg viewBox="0 0 20 20" className="h-5 w-5" fill="none" stroke="#d8d8d8">
            <circle cx="6" cy="6" r="3.500" strokeWidth="3" />
            <path d="M9 9l8 8M13 13l3-2M15 16l3-2" strokeWidth="2.500" />
          </svg>
        </button>
        <div className="flex h-[23px] shrink-0 border border-[#222]">
          <button aria-label="Realtime" className="flex w-[21px] items-center justify-center bg-[#c08a24]">
            <svg viewBox="0 0 16 16" className="h-4 w-4" fill="none" stroke="#e8e8e8">
              <circle cx="8" cy="8" r="6" fill="#5b4a28" strokeWidth="1.500" />
              <path d="M8 4v7M5 8h6" strokeWidth="1.500" />
            </svg>
          </button>
          <button aria-label="Loop" className="flex w-[22px] items-center justify-center border-l border-[#222] bg-[#4c4c4c]">
            <svg viewBox="0 0 16 16" className="h-4 w-4" fill="none" stroke="#dcdcdc">
              <path d="M4 6c3-3 9-2 9 3" strokeWidth="2.500" />
              <path d="M1 7h6L2 2z" fill="#dcdcdc" />
              <path d="M1 12h14" strokeWidth="2" />
            </svg>
          </button>
          <button aria-label="Audio" className="flex w-[22px] items-center justify-center border-l border-[#222] bg-[#4c4c4c]">
            <svg viewBox="0 0 16 16" className="h-4 w-4" fill="none" stroke="#a8a8a8">
              <ellipse cx="9" cy="8" rx="3" ry="6" />
              <path d="M8 6l-4 1v3l4 1M13 3c2 3 2 7 0 10M1 4v8" />
            </svg>
          </button>
          <button aria-label="Options" className="flex w-[22px] items-center justify-center border-l border-[#222] bg-[#4c4c4c]">
            <svg viewBox="0 0 16 16" className="h-4 w-4">
              <path d="M2 2h12v10H2z" fill="#e6e6e6" />
              <path d="M2 5h12" stroke="#777" />
              <path d="M7 5v10l3-2 2 3 2-1-2-3h3z" fill="#fff" stroke="#222" />
            </svg>
          </button>
        </div>
      </div>
    </div>
  );
}

function StatusBar() {
  return (
    <div className="flex h-[26px] shrink-0 items-stretch justify-end gap-0.5 bg-[#1b1b1b] pt-px text-[11px] text-[#bdbdbd]">
      <button aria-label="Cook" className="flex w-6 items-center justify-center bg-[#454545]">
        <svg viewBox="0 0 18 16" className="h-4 w-[18px]">
          <path d="M1 7l7-4v3h6v4H8v3z" fill="#d0d0d0" />
          <path d="M13 9v6l4-3z" fill="#8a8a8a" />
        </svg>
      </button>
      <button className="flex w-[125px] items-center border border-[#222] bg-[#484848] pl-3.5">
        <span className="flex-1 text-left whitespace-nowrap">/obj/fracture/d...</span>
        <UpDown />
      </button>
      <button aria-label="Refresh" className="flex w-[22px] items-center justify-center text-[#6c6c6c]">
        <RefreshCw className="h-4 w-4" />
      </button>
      <button className="flex w-[117px] items-center bg-linear-to-b from-[#4a4a4a] to-[#3c3c3c] pl-3.5">
        <span className="flex-1 text-left whitespace-nowrap">Auto Update</span>
        <UpDown />
      </button>
    </div>
  );
}

/* ---------- app ---------- */

function TitleBar() {
  return (
    <div className="flex h-[23px] shrink-0 items-center gap-1.5 bg-white pr-0.5 pl-0.5 font-[Roboto,sans-serif] text-xs text-[#8c8c8c]">
      <Houdini />
      <h1 className="whitespace-nowrap">
        F:/Pluralsight/module_3/m3-exercise-files/M03-01-Begin.hipnc - Houdini Apprentice Non-Commercial 16.0.504.20
      </h1>
      <div className="ml-auto flex items-center pb-0.5 text-[#777]">
        <button aria-label="Minimize" className="flex w-[45px] justify-center">
          <Minus className="h-3.5 w-3.5" strokeWidth={1.5} />
        </button>
        <button aria-label="Restore" className="flex w-[45px] justify-center">
          <Copy className="h-3 w-3 -scale-y-100" strokeWidth={2} />
        </button>
        <button aria-label="Close" className="flex w-[47px] justify-center">
          <X className="h-4 w-4" strokeWidth={1.5} />
        </button>
      </div>
    </div>
  );
}

function MenuBar() {
  return (
    <nav className="flex h-[26px] shrink-0 items-center bg-linear-to-b from-[#3c3c3c] to-[#333] pl-px text-xs text-[#cfcfcf]">
      <button aria-label="Hide menu" className="mr-1.5 flex h-full w-[9px] justify-center border-r border-black bg-[#454545] pt-px text-black">
        <Tri dir="up" />
      </button>
      <div className="flex gap-[9px]">
        {["File", "Edit", "Render", "Assets", "Windows", "Help"].map((m) => (
          <button key={m}>{m}</button>
        ))}
      </div>
      <button className="ml-6 flex h-6 w-32 items-center gap-1 bg-[#484848] pl-1.5">
        <Layout /> <span className="flex-1 text-left">PLURALSIGHT</span>
        <UpDown />
      </button>
      <button className="ml-1 flex h-6 w-32 items-center gap-1 bg-[#484848] pl-1.5">
        <Target /> <span className="flex-1 text-left">Main</span>
        <UpDown />
      </button>
      <button className="mr-2.5 ml-auto flex h-6 w-32 items-center gap-1 bg-[#484848] pl-1">
        <Clapper className="h-4 w-4" /> <span className="flex-1 text-left">Main</span>
        <UpDown />
      </button>
      <div className="pr-2.5">
        <Help />
      </div>
    </nav>
  );
}

function Grip() {
  return (
    <div className="grid grid-cols-2 gap-px">
      {Array.from({ length: 14 }, (_, i) => (
        <span key={i} className="h-0.5 w-0.5 bg-[#7c7c7c]" />
      ))}
    </div>
  );
}

export default function App() {
  return (
    <div className="relative flex h-screen flex-col overflow-hidden bg-[#2f2f2f] font-['Noto_Sans_CJK_SC',sans-serif]">
      <TitleBar />
      <MenuBar />
      <div className="flex h-[11px] shrink-0 items-center border-y border-black bg-linear-to-b from-[#5c5c5c] to-[#3c3c3c] pl-px text-black">
        <Tri />
      </div>
      <main className="flex min-h-0 flex-1">
        <div className="flex w-2 shrink-0 flex-col items-center justify-center gap-4 border-x border-black bg-[#4a4a4a] text-[#7c7c7c]">
          <Tri dir="right" className="h-1.5 w-1.5" />
          <Grip />
          <Tri dir="right" className="h-1.5 w-1.5" />
        </div>
        <ScenePane />
        <div className="w-2 shrink-0 border-r border-black bg-[#4a4a4a]" />
        <div className="flex min-w-0 flex-[479] flex-col">
          <ParameterPane />
          <div className="flex h-1.5 shrink-0 items-center justify-center gap-4 border-t border-[#7c7c7c] bg-[#444] pl-5">
            <span className="w-6 border-y-2 border-dotted border-[#8a8a8a]" />
            <Tri className="h-1.5 w-1.5 text-[#8a8a8a]" />
          </div>
          <NetworkPane />
        </div>
      </main>
      <Playbar />
      <StatusBar />
      <NodeInfo />
      {/* recording watermark */}
      <svg viewBox="0 0 46 46" className="pointer-events-none absolute right-[17px] bottom-3.5 h-[46px] w-[46px]" fill="none">
        <circle cx="23" cy="23" r="23" fill="#aaa" fillOpacity="0.220" />
        <path d="M14 12l22 11-22 11zM20 15v16M23 17l11 6-11 6z" stroke="#333" strokeOpacity="0.800" strokeWidth="2" />
      </svg>
    </div>
  );
}
